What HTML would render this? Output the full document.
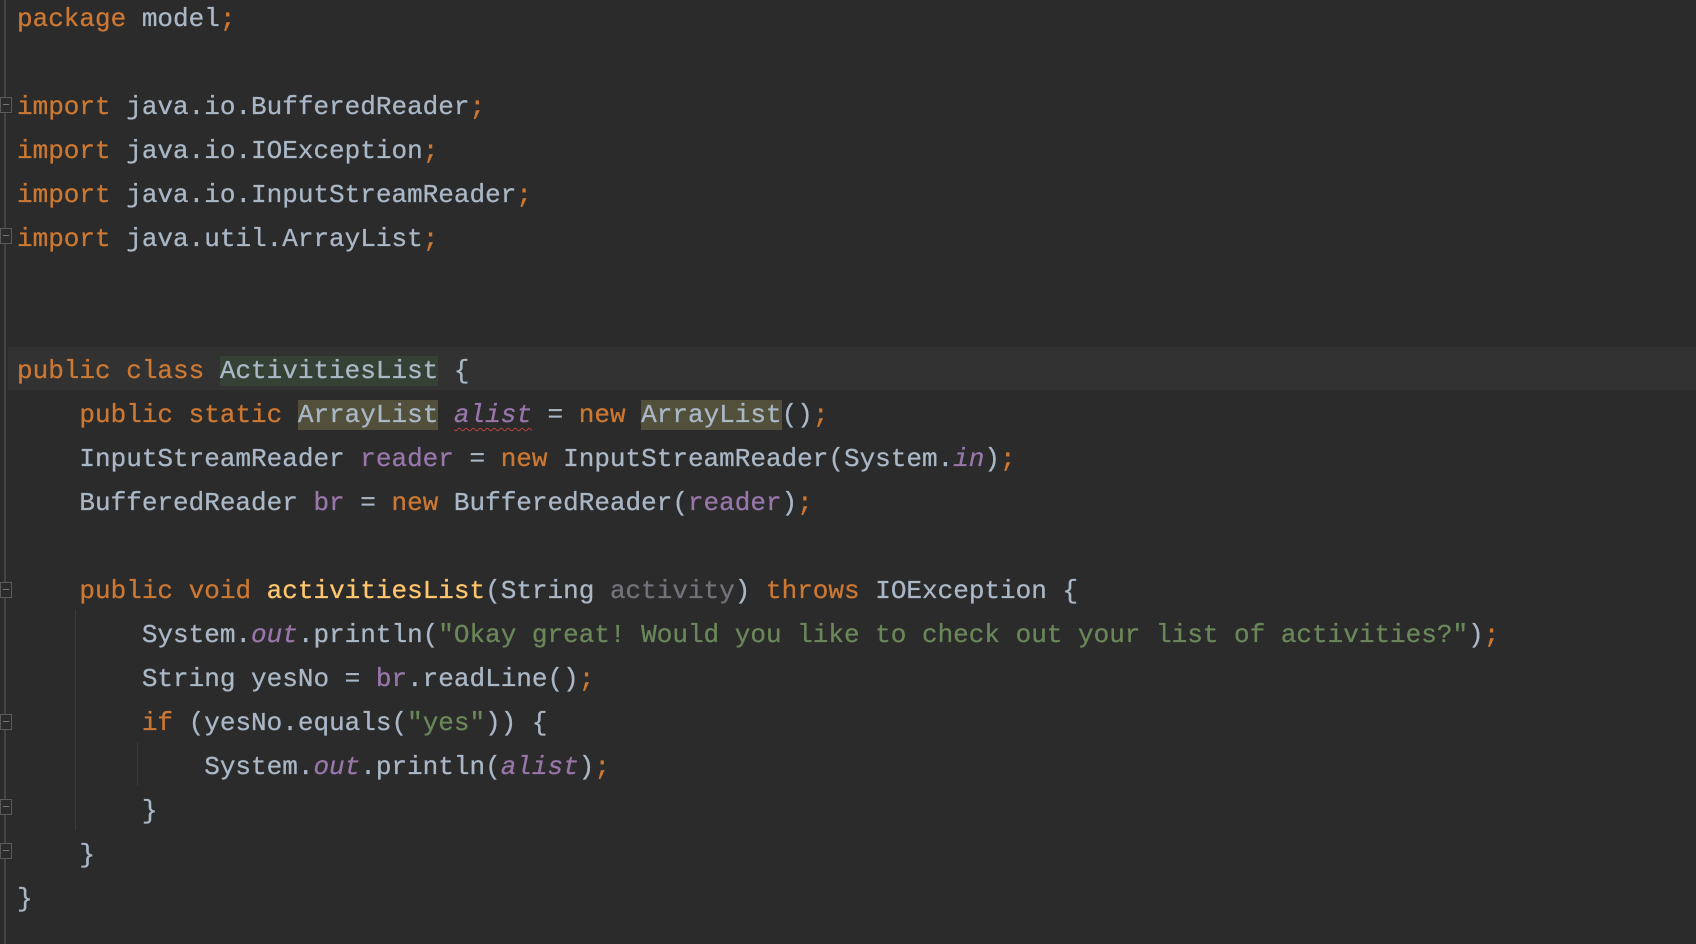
<!DOCTYPE html>
<html><head><meta charset="utf-8"><style>
html,body{margin:0;padding:0;background:#2b2b2b;width:1696px;height:944px;overflow:hidden}
.l{position:absolute;left:17px;height:44px;line-height:44px;font-family:"Liberation Mono",monospace;font-size:26px;color:#a9b7c6;white-space:pre;-webkit-text-stroke:0.3px currentColor}
.k{color:#cc7832}.s{color:#6a8759}.p{color:#9876aa}.i{font-style:italic}.m{color:#ffc66d}.g{color:#72737a}
.hc{background:#344134}.ha{background:#52503a}
.u{text-decoration:underline wavy #bc3f3c;text-decoration-thickness:1px;text-underline-offset:5px}
.cur{position:absolute;left:8px;right:0;top:347px;height:43px;background:#323232}
.gut{position:absolute;left:4px;top:0;width:2px;height:944px;background:#454545}
.f{position:absolute;left:0;width:12px;height:16px;border:1px solid #5a5a5a;background:#2b2b2b;box-sizing:border-box}
.f:after{content:"";position:absolute;left:2px;right:2px;top:6px;height:1px;background:#777}
.ig{position:absolute;width:1px;background:#3b3b3b}
</style></head><body>
<div class="cur"></div>
<div class="gut"></div>
<div class="f" style="top:97px"></div>
<div class="f" style="top:228px"></div>
<div class="f" style="top:582px"></div>
<div class="f" style="top:714px"></div>
<div class="f" style="top:799px"></div>
<div class="f" style="top:843px"></div>
<div class="ig" style="left:75px;top:610px;height:220px"></div>
<div class="ig" style="left:137px;top:742px;height:44px"></div>
<div class="l" style="top:-3px"><span class="k">package</span> model<span class="k">;</span></div>
<div class="l" style="top:85px"><span class="k">import</span> java.io.BufferedReader<span class="k">;</span></div>
<div class="l" style="top:129px"><span class="k">import</span> java.io.IOException<span class="k">;</span></div>
<div class="l" style="top:173px"><span class="k">import</span> java.io.InputStreamReader<span class="k">;</span></div>
<div class="l" style="top:217px"><span class="k">import</span> java.util.ArrayList<span class="k">;</span></div>
<div class="l" style="top:349px"><span class="k">public class</span> <span class="hc">ActivitiesList</span> {</div>
<div class="l" style="top:393px">    <span class="k">public static</span> <span class="ha">ArrayList</span> <span class="p i u">alist</span> = <span class="k">new</span> <span class="ha">ArrayList</span>()<span class="k">;</span></div>
<div class="l" style="top:437px">    InputStreamReader <span class="p">reader</span> = <span class="k">new</span> InputStreamReader(System.<span class="p i">in</span>)<span class="k">;</span></div>
<div class="l" style="top:481px">    BufferedReader <span class="p">br</span> = <span class="k">new</span> BufferedReader(<span class="p">reader</span>)<span class="k">;</span></div>
<div class="l" style="top:569px">    <span class="k">public void</span> <span class="m">activitiesList</span>(String <span class="g">activity</span>) <span class="k">throws</span> IOException {</div>
<div class="l" style="top:613px">        System.<span class="p i">out</span>.println(<span class="s">"Okay great! Would you like to check out your list of activities?"</span>)<span class="k">;</span></div>
<div class="l" style="top:657px">        String yesNo = <span class="p">br</span>.readLine()<span class="k">;</span></div>
<div class="l" style="top:701px">        <span class="k">if</span> (yesNo.equals(<span class="s">"yes"</span>)) {</div>
<div class="l" style="top:745px">            System.<span class="p i">out</span>.println(<span class="p i">alist</span>)<span class="k">;</span></div>
<div class="l" style="top:789px">        }</div>
<div class="l" style="top:833px">    }</div>
<div class="l" style="top:877px">}</div>
</body></html>
